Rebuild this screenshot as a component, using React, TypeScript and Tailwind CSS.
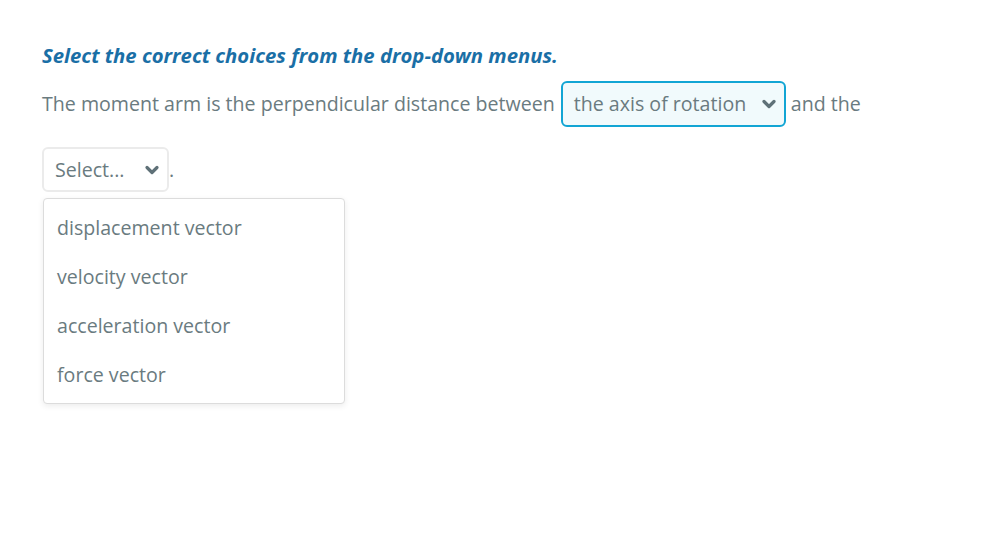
const OPTIONS = ['displacement vector', 'velocity vector', 'acceleration vector', 'force vector'];

function Chevron() {
  return (
    <svg className="w-[16px] h-[16px] shrink-0 text-[#5f7178]" viewBox="0 0 16 16" fill="none" stroke="currentColor" strokeWidth="3.2" strokeLinecap="round" strokeLinejoin="round">
      <path d="M3 5.5l5 5 5-5" />
    </svg>
  );
}

export default function App() {
  return (
    <div className="min-h-screen bg-white font-['Open_Sans','Noto_Sans',sans-serif] text-[19.6px] text-[#6a7b80] pl-[42px] pt-[40px]">
      <p className="font-bold italic text-[20.3px] text-[#1a6fa6] leading-[30px]">
        Select the correct choices from the drop-down menus.
      </p>

      <div className="mt-[11px] flex items-center h-[46px]">
        <span>The moment arm is the perpendicular distance between</span>
        <div className="ml-[6px] h-[46px] w-[225px] flex items-center justify-between pl-[11px] pr-[7px] rounded-[6px] border-2 border-[#12a5d4] bg-[#f1fafc]">
          <span>the axis of rotation</span>
          <Chevron />
        </div>
        <span className="ml-[5px]">and the</span>
      </div>

      <div className="mt-[20px] flex items-center">
        <div className="h-[45px] w-[127px] flex items-center justify-between pl-[11px] pr-[7px] rounded-[6px] border-2 border-[#ebebeb] bg-white">
          <span>Select...</span>
          <Chevron />
        </div>
        <span>.</span>
      </div>

      <ul className="mt-[6px] ml-[1px] w-[302px] rounded-[4px] border border-[#dcdcdc] bg-white shadow-[0_2px_6px_rgba(0,0,0,0.08)] py-[4px]">
        {OPTIONS.map((opt) => (
          <li key={opt} className="h-[49px] flex items-center px-[13px]">
            {opt}
          </li>
        ))}
      </ul>
    </div>
  );
}
